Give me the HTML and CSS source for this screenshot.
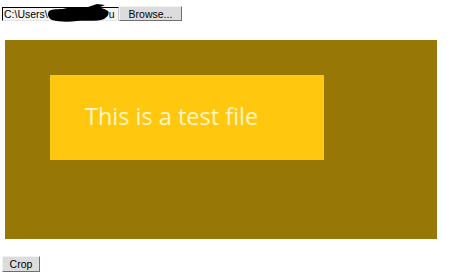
FILE: index.html
```html
<!DOCTYPE html>
<html>
<head>
<meta charset="utf-8">
<link rel="stylesheet" href="styles.css">
</head>
<body>
<div class="file-row">
  <div class="file-field">
    <span class="path">C:\Users\</span><span class="gap"></span><span class="path">u</span>
    <svg class="scribble" width="64" height="19" viewBox="0 0 64 19">
      <path d="M2 7 C8 4 14 6 20 4 C28 2 36 5 44 3 C50 2 56 4 61 7 C63 10 60 13 57 15 C49 18 38 16 30 17 C22 18 12 18 5 16 C1 14 0 10 2 7 Z" fill="#000"/>
      <path d="M38 4 L50 0 L58 1 L46 6 Z" fill="#000"/>
    </svg>
  </div>
  <div class="btn browse">Browse...</div>
</div>
<div class="stage">
  <div class="crop-area">
    <div class="slide-text">This is a test file</div>
  </div>
</div>
<div class="btn crop">Crop</div>
</body>
</html>
```
FILE: styles.css
```css
html, body {
  margin: 0;
  padding: 0;
  background: #ffffff;
  width: 474px;
  height: 280px;
  overflow: hidden;
  font-family: "Liberation Sans", Arial, sans-serif;
}
.file-row {
  display: flex;
  margin: 7px 0 0 2px;
  height: 14px;
}
.file-field {
  position: relative;
  width: 114px;
  height: 12px;
  border: 1px solid #000;
  border-right: 1px solid #c8c8c8;
  border-bottom: 1px solid #e6e6e6;
  background: #f4f4f4;
  font-size: 10.5px;
  line-height: 12px;
  color: #000;
  padding-left: 1px;
  box-sizing: content-box;
  overflow: visible;
  display: flex;
  align-items: center;
}
.gap {
  display: inline-block;
  width: 61px;
}
.scribble {
  position: absolute;
  left: 44px;
  top: -4px;
}
.btn {
  background: #dcdcdc;
  border: 1px solid;
  border-color: #f2f2f2 #6f6f6f #6f6f6f #f2f2f2;
  font-size: 10.5px;
  color: #000;
  display: flex;
  align-items: center;
  justify-content: center;
  box-sizing: border-box;
}
.browse {
  width: 63px;
  height: 15px;
  margin-top: -1px;
}
.stage {
  margin: 19px 0 0 5px;
  width: 432px;
  height: 199px;
  background: #977807;
  padding: 35px 0 0 45px;
  box-sizing: border-box;
}
.crop-area {
  width: 274px;
  height: 85px;
  background: #ffc80e;
  display: flex;
  align-items: center;
  padding-left: 35px;
  box-sizing: border-box;
}
.slide-text {
  font-family: "Open Sans", sans-serif;
  font-size: 23.5px;
  color: #fff5cc;
  margin-top: -4px;
}
.crop {
  margin: 17px 0 0 2px;
  width: 38px;
  height: 16px;
}
```
